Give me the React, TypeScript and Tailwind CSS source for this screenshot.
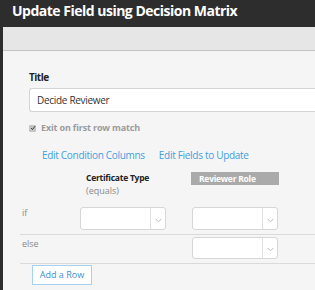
import React from "react";

function Select({ className = "" }: { className?: string }) {
  return (
    <div className={"flex w-[86px] rounded-[3px] border border-[#d6d6d6] bg-white " + className}>
      <div className="flex-1" />
      <div className="flex w-[15px] items-center justify-center border-l border-[#e0e0e0]">
        <svg width="7" height="5" viewBox="0 0 7 5" className="mt-[3px]">
          <path d="M0.6 0.9 L3.5 3.8 L6.4 0.9" fill="none" stroke="#b3b3b3" strokeWidth="0.9" />
        </svg>
      </div>
    </div>
  );
}

export default function App() {
  return (
    <div className="flex h-[290px] w-[315px] flex-col overflow-hidden bg-[#2d2d2d] font-['Open_Sans','Liberation_Sans',sans-serif]">
      <div className="h-[27px] shrink-0 pl-[12px] pt-[4px] text-[14px] font-bold leading-[14px] tracking-[-0.5px] text-white">
        Update Field using Decision Matrix
      </div>
      <div className="ml-[3px] flex flex-1 flex-col bg-[#f5f5f5]">
        <div className="h-[24px] shrink-0 border-b border-[#c4c4c4] bg-[#e6e6e6]" />
        <div className="flex flex-col pl-[26px]">
          <div className="mt-[20px] text-[10px] font-bold leading-[12px] tracking-[-0.5px] text-[#222]">Title</div>
          <div className="mt-[5px] flex h-[24px] items-center rounded-l-[3px] border border-r-0 border-[#d4d4d4] bg-white pl-[7px] text-[10px] leading-[12px] tracking-[-0.3px] text-[#333]">
            Decide Reviewer
          </div>
          <div className="mt-[10px] flex h-[12px] items-center text-[9px] font-bold leading-[12px] tracking-[-0.15px] text-[#9b9b9b]">
            <div className="flex h-[7px] w-[7px] items-center justify-center rounded-[1px] bg-[#c4c4c4]">
              <svg width="6" height="6" viewBox="0 0 6 6">
                <path d="M1.1 3.1 L2.5 4.5 L5 1.2" fill="none" stroke="#3a3a3a" strokeWidth="1" />
              </svg>
            </div>
            <span className="ml-[5px]">Exit on first row match</span>
          </div>
        </div>
        <div className="mt-[15px] flex pl-[39px] text-[10px] leading-[12px] tracking-[-0.3px] text-[#439fe0]">
          <span>Edit Condition Columns</span>
          <span className="ml-[14px]">Edit Fields to Update</span>
        </div>
        <div className="mt-[11px] flex pl-[83px]">
          <div className="flex w-[105px] flex-col">
            <span className="text-[8.5px] font-bold leading-[12px] tracking-[-0.25px] text-[#222]">Certificate Type</span>
            <span className="mt-[1px] text-[9px] leading-[12px] text-[#8a8a8a]">(equals)</span>
          </div>
          <div className="h-[13px] w-[88px] bg-[#aaaaaa] pl-[8px] text-[8.5px] font-bold leading-[13px] tracking-[-0.25px] text-white">
            Reviewer Role
          </div>
        </div>
        <div className="ml-[17px] flex flex-col">
          <div className="flex border-b border-[#dadada] pb-[4px] pl-[2px] pt-[10px]">
            <span className="w-[58px] text-[9px] leading-[12px] text-[#8a8a8a]">if</span>
            <Select className="h-[23px]" />
            <Select className="ml-[26px] h-[23px]" />
          </div>
          <div className="flex border-b border-[#dadada] pb-[4px] pl-[2px] pt-[2px]">
            <span className="mt-[1px] w-[170px] text-[9px] leading-[12px] text-[#8a8a8a]">else</span>
            <Select className="h-[22px]" />
          </div>
        </div>
        <div className="ml-[29px] mt-[1px] flex h-[20px] w-[60px] items-center justify-center border border-[#a6d1f0] bg-white text-[9px] leading-[12px] text-[#3b90d4]">
          Add a Row
        </div>
      </div>
    </div>
  );
}
